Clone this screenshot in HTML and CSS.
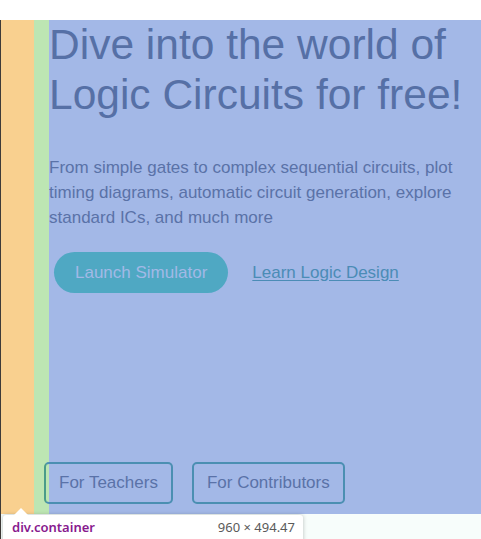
FILE: index.html
```html
<!DOCTYPE html>
<html>
<head>
<meta charset="utf-8">
<link rel="stylesheet" href="styles.css">
</head>
<body>
<div class="top"></div>
<div class="stage">
  <div class="edge"></div>
  <div class="margin-box">
    <div class="padding-box">
      <div class="content">
        <h1 class="title">Dive into the world of<br>Logic Circuits for free!</h1>
        <p class="lead">From simple gates to complex sequential circuits, plot timing diagrams, automatic circuit generation, explore standard ICs, and much more</p>
        <div class="actions">
          <a class="btn-primary">Launch Simulator</a>
          <a class="link">Learn Logic Design</a>
        </div>
        <div class="spacer"></div>
        <div class="secondary">
          <a class="btn-outline first">For Teachers</a>
          <a class="btn-outline">For Contributors</a>
        </div>
      </div>
    </div>
  </div>
</div>
<div class="footer">
  <div class="edge"></div>
  <div class="tooltip">
    <span class="tip-arrow"></span>
    <span class="tip-name">div.container</span>
    <span class="tip-size">960 × 494.47</span>
  </div>
</div>
</body>
</html>
```
FILE: styles.css
```css
html, body {
  margin: 0;
  padding: 0;
  overflow: hidden;
  background: #f7fdfb;
}
body {
  width: 481px;
  height: 539px;
  font-family: "Liberation Sans", Arial, sans-serif;
}
.top {
  height: 20px;
  background: #ffffff;
}
.stage {
  display: flex;
  height: 494px;
}
.edge {
  width: 1px;
  background: #3f3b38;
  flex: none;
}
.margin-box {
  flex: 1;
  background: #f9d08f;
  padding-left: 33px;
  display: flex;
}
.padding-box {
  flex: 1;
  background: #bde6b3;
  padding-left: 15px;
  display: flex;
}
.content {
  flex: 1;
  background: #a3b8e7;
  display: flex;
  flex-direction: column;
  padding-bottom: 10px;
}
.title {
  margin: 0;
  font-size: 42.5px;
  line-height: 50px;
  font-weight: normal;
  color: #5670a6;
  white-space: nowrap;
}
.lead {
  margin: 35px 0 0 0;
  font-size: 17px;
  line-height: 25px;
  color: #5a72a8;
  width: 410px;
}
.actions {
  margin-top: 22px;
  display: flex;
  align-items: center;
  padding-left: 5px;
  gap: 24px;
}
.btn-primary {
  display: flex;
  align-items: center;
  height: 41px;
  padding: 0 21px;
  border-radius: 21px;
  background: #4fa8c3;
  color: #a2b9e6;
  font-size: 17px;
}
.link {
  font-size: 17px;
  color: #4b8cb6;
  text-decoration: underline;
  text-underline-offset: 2px;
}
.spacer {
  flex: 1;
}
.secondary {
  display: flex;
  gap: 19px;
  margin-left: -5px;
}
.btn-outline {
  box-sizing: border-box;
  display: flex;
  align-items: center;
  height: 42px;
  padding: 0 13px;
  border: 2px solid #4b8fb2;
  border-radius: 5px;
  color: #5a72a8;
  font-size: 17px;
}
.btn-outline.first {
  border-left-color: #4a9c8a;
}
.footer {
  display: flex;
  height: 25px;
}
.tooltip {
  position: relative;
  margin: 1px 0 0 2px;
  width: 300px;
  height: 30px;
  background: #ffffff;
  border-radius: 3px;
  box-shadow: 0 0 4px rgba(0, 0, 0, 0.25);
  display: flex;
  align-items: flex-start;
  justify-content: space-between;
  padding: 3px 8px 0 9px;
  box-sizing: border-box;
  font-family: "Noto Sans", "DejaVu Sans", sans-serif;
  font-size: 13px;
}
.tip-arrow {
  position: absolute;
  left: 11px;
  top: -7px;
  width: 0;
  height: 0;
  border-left: 7px solid transparent;
  border-right: 7px solid transparent;
  border-bottom: 7px solid #ffffff;
}
.tip-name {
  color: #881a8e;
  font-weight: 600;
}
.tip-size {
  color: #5a5a5a;
}
```
